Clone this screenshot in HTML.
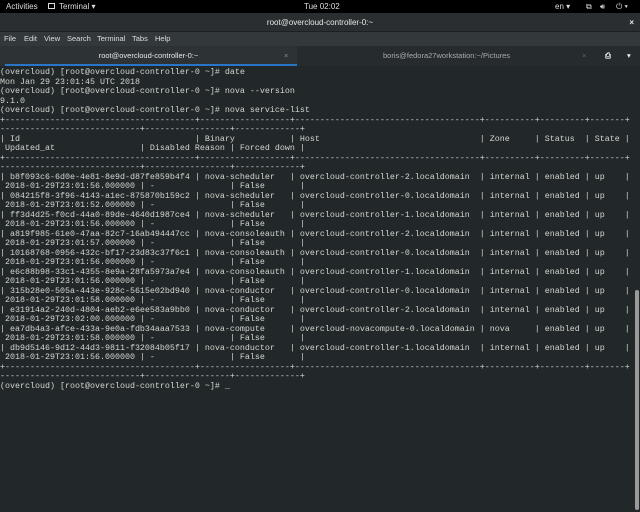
<!DOCTYPE html>
<html><head><meta charset="utf-8"><style>
*{margin:0;padding:0;box-sizing:border-box}
body{width:640px;height:512px;overflow:hidden;background:#22272a;font-family:"Liberation Sans",sans-serif;position:relative}
.top{position:absolute;left:0;top:0;width:640px;height:13px;background:#000;color:#ddd;font-size:8px;line-height:13px}
.title{position:absolute;left:0;top:13px;width:640px;height:19px;background:#2a2e30;color:#e8e8e8;font-size:8px;line-height:19px;text-align:center;border-bottom:1px solid #1d2022}
.menu{position:absolute;left:0;top:32px;width:640px;height:14px;background:#33393b;color:#ddd;font-size:7.5px;line-height:14px}
.menu span{position:absolute}
.tabs{position:absolute;left:0;top:46px;width:640px;height:20px;background:#262b2e;font-size:7.5px;line-height:20px;color:#aaa}
.tab1{position:absolute;left:0;top:0;width:297px;height:20px;background:#2d3235;color:#e8e8e8;text-align:center}
.uline{position:absolute;left:5px;top:18px;width:292px;height:2px;background:#2a76c6}
pre{position:absolute;left:0;top:68px;font-family:"Liberation Mono",monospace;font-size:8.33px;line-height:9.5px;color:#d3d7cf;white-space:pre}
.sb{position:absolute;left:635px;top:290px;width:4px;height:220px;background:#9a9a9a;border-radius:2px}
</style></head><body>
<div class="top"><span style="position:absolute;left:6px">Activities</span><span style="position:absolute;left:48px;top:3px;width:7px;height:6px;border:1px solid #ddd"></span><span style="position:absolute;left:59px">Terminal ▾</span><span style="position:absolute;left:304px">Tue 02:02</span><span style="position:absolute;left:555px">en ▾</span><span style="position:absolute;left:586px">⧉</span><span style="position:absolute;left:600px">🔊︎</span><span style="position:absolute;left:616px">⏻ ▾</span></div>
<div class="title">root@overcloud-controller-0:~<span style="position:absolute;right:6px;top:0;font-weight:bold">×</span></div>
<div class="menu"><span style="left:4px">File</span><span style="left:24px">Edit</span><span style="left:44px">View</span><span style="left:67px">Search</span><span style="left:97px">Terminal</span><span style="left:132px">Tabs</span><span style="left:155px">Help</span></div>
<div class="tabs"><div class="tab1">root@overcloud-controller-0:~<span style="position:absolute;left:284px;color:#888">×</span></div><div class="uline"></div><span style="position:absolute;left:383px">boris@fedora27workstation:~/Pictures</span><span style="position:absolute;left:582px;color:#666">×</span><span style="position:absolute;left:605px;color:#eee;font-weight:bold">⎙</span><span style="position:absolute;left:627px;color:#eee">▾</span></div>
<pre>(overcloud) [root@overcloud-controller-0 ~]# date
Mon Jan 29 23:01:45 UTC 2018
(overcloud) [root@overcloud-controller-0 ~]# nova --version
9.1.0
(overcloud) [root@overcloud-controller-0 ~]# nova service-list
+--------------------------------------+------------------+-------------------------------------+----------+---------+-------+
----------------------------+-----------------+-------------+
| Id                                   | Binary           | Host                                | Zone     | Status  | State |
 Updated_at                 | Disabled Reason | Forced down |
+--------------------------------------+------------------+-------------------------------------+----------+---------+-------+
----------------------------+-----------------+-------------+
| b8f093c6-6d0e-4e81-8e9d-d87fe859b4f4 | nova-scheduler   | overcloud-controller-2.localdomain  | internal | enabled | up    |
 2018-01-29T23:01:56.000000 | -               | False       |
| 084215f8-3f96-4143-a1ec-875870b159c2 | nova-scheduler   | overcloud-controller-0.localdomain  | internal | enabled | up    |
 2018-01-29T23:01:52.000000 | -               | False       |
| ff3d4d25-f0cd-44a0-89de-4640d1987ce4 | nova-scheduler   | overcloud-controller-1.localdomain  | internal | enabled | up    |
 2018-01-29T23:01:56.000000 | -               | False       |
| a819f985-61e0-47aa-82c7-16ab494447cc | nova-consoleauth | overcloud-controller-2.localdomain  | internal | enabled | up    |
 2018-01-29T23:01:57.000000 | -               | False       |
| 10168768-0956-432c-bf17-23d83c37f6c1 | nova-consoleauth | overcloud-controller-0.localdomain  | internal | enabled | up    |
 2018-01-29T23:01:56.000000 | -               | False       |
| e6c88b98-33c1-4355-8e9a-28fa5973a7e4 | nova-consoleauth | overcloud-controller-1.localdomain  | internal | enabled | up    |
 2018-01-29T23:01:56.000000 | -               | False       |
| 315b28e0-505a-443e-928c-5615e02bd940 | nova-conductor   | overcloud-controller-0.localdomain  | internal | enabled | up    |
 2018-01-29T23:01:58.000000 | -               | False       |
| e31914a2-240d-4804-aeb2-e6ee583a9bb0 | nova-conductor   | overcloud-controller-2.localdomain  | internal | enabled | up    |
 2018-01-29T23:02:00.000000 | -               | False       |
| ea7db4a3-afce-433a-9e0a-fdb34aaa7533 | nova-compute     | overcloud-novacompute-0.localdomain | nova     | enabled | up    |
 2018-01-29T23:01:58.000000 | -               | False       |
| db9d5146-9d12-44d3-9811-f32084b05f17 | nova-conductor   | overcloud-controller-1.localdomain  | internal | enabled | up    |
 2018-01-29T23:01:56.000000 | -               | False       |
+--------------------------------------+------------------+-------------------------------------+----------+---------+-------+
----------------------------+-----------------+-------------+
(overcloud) [root@overcloud-controller-0 ~]# _</pre>
<div class="sb"></div>
</body></html>
